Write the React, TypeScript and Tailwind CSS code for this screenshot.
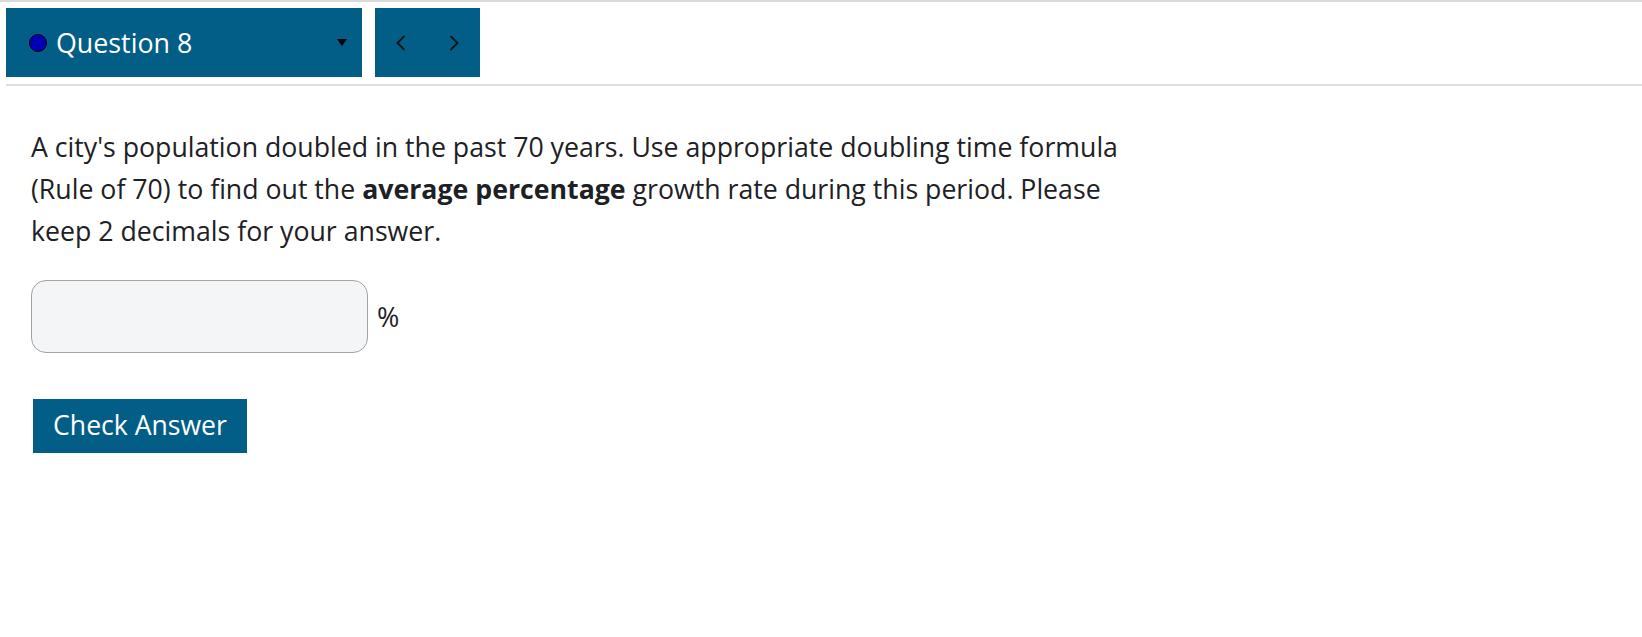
import React from "react";

export default function App() {
  return (
    <div className="min-h-[637px] w-full bg-white text-[#1d2125]" style={{ fontFamily: '"Open Sans", "Noto Sans", sans-serif' }}>
      <div className="border-t-2 border-[#dadada]">
        <div className="ml-[6px] flex gap-[13px] border-b-2 border-[#dedede] pt-[6px] pb-[7px]">
          <div className="flex h-[69px] w-[356px] items-center bg-[#025e86] pl-[23px]">
            <span className="block h-[18px] w-[18px] rounded-full border-[1.5px] border-black bg-[#0000b4]" />
            <span className="ml-[9px] mt-[2px] text-[26.8px] leading-none text-white">Question 8</span>
            <svg className="ml-auto mr-[15px]" width="10" height="7" viewBox="0 0 10 7">
              <polygon points="0,0 10,0 5,7" fill="#000" />
            </svg>
          </div>
          <div className="flex h-[69px] w-[105px] items-center justify-center gap-[43px] bg-[#025e86]">
            <svg width="10" height="16" viewBox="0 0 10 16">
              <polyline points="8.5,1 1.5,8 8.5,15" fill="none" stroke="#111" strokeWidth="1.8" />
            </svg>
            <svg width="10" height="16" viewBox="0 0 10 16">
              <polyline points="1.5,1 8.5,8 1.5,15" fill="none" stroke="#111" strokeWidth="1.8" />
            </svg>
          </div>
        </div>
      </div>

      <div className="pl-[31px] pt-[40px]">
        <p className="text-[26.7px] leading-[42px] whitespace-nowrap">
          A city's population doubled in the past 70 years. Use appropriate doubling time formula
          <br />
          (Rule of 70) to find out the <strong className="font-bold">average percentage</strong> growth rate during this period. Please
          <br />
          keep 2 decimals for your answer.
        </p>

        <div className="mt-[28px] flex items-center gap-[9px]">
          <input
            type="text"
            aria-label="Answer"
            className="h-[73px] w-[337px] rounded-[15px] border border-[#a3a3a3] bg-[#f4f5f7] px-4 text-[26px] outline-none"
          />
          <span className="text-[27px] leading-none">%</span>
        </div>

        <button
          type="button"
          className="ml-[2px] mt-[46px] flex h-[54px] w-[214px] items-center justify-center bg-[#025e86] text-[26.6px] text-white"
        >
          Check Answer
        </button>
      </div>
    </div>
  );
}
